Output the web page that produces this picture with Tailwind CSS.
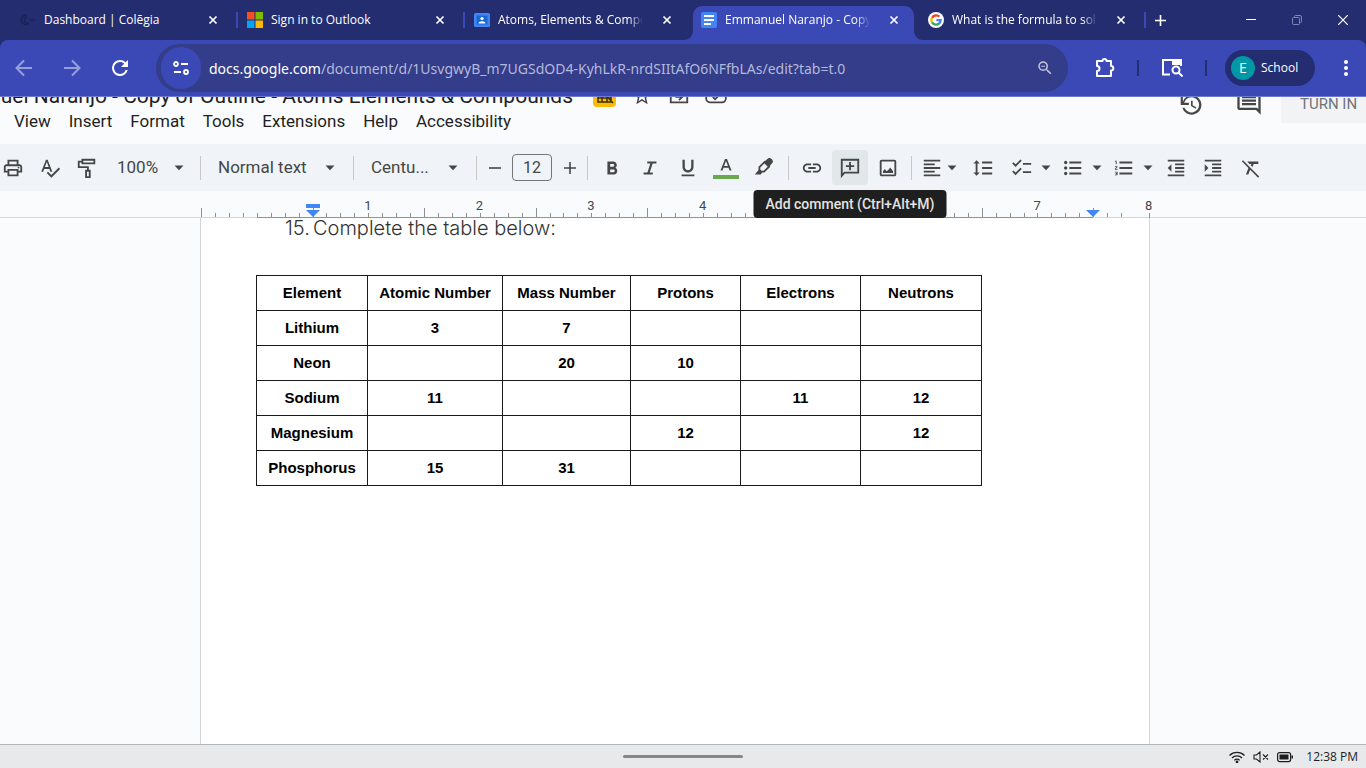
<!DOCTYPE html>
<html lang="en">
  <head>
    <meta charset="utf-8" />
    <meta content="width=device-width, initial-scale=1.0" name="viewport" />
    <title>Emmanuel Naranjo - Copy of Outline - Atoms Elements & Compounds</title>
    <script src="https://cdn.jsdelivr.net/npm/@tailwindcss/browser@4"></script>
  </head>
  <body
    class="flex flex-col h-screen overflow-hidden bg-[#f9fbfd] text-[#444746] font-['Roboto',sans-serif]"
  >
    <svg class="hidden">
      <symbol id="close" viewBox="0 0 16 16">
        <path d="M4.5 4.5l7 7M11.5 4.5l-7 7" stroke="currentColor" stroke-width="1.7" />
      </symbol>
      <symbol id="arrow" viewBox="0 0 10 6">
        <path d="M0.5 0.5h9L5 5.3z" fill="currentColor" />
      </symbol>
    </svg>

    <!-- Tab strip -->
    <header
      class="flex items-stretch h-10 shrink-0 pl-[9px] bg-[#252d71] text-white text-[12px] font-['Open_Sans',sans-serif]"
    >
      <div class="flex items-center w-[227px] pl-[11px] pr-[15px]">
        <svg class="w-4 h-4 shrink-0" viewBox="0 0 16 16">
          <path d="M7 3.500a4.500 4.500 0 1 0 2 7.500M7 5a3 3 0 0 0 1 6" fill="none" stroke="#1a2158" stroke-width="1.500" />
          <path d="M8 7.500h8M9 9h5" stroke="#1e2560" />
        </svg>
        <span class="flex-1 ml-2 mr-4 overflow-hidden whitespace-nowrap">Dashboard | Colēgia</span>
        <button aria-label="Close tab"><svg class="w-4 h-4"><use href="#close" /></svg></button>
      </div>
      <div class="self-center w-[2px] h-4 -mr-[2px] bg-[#3b49b6]"></div>
      <div class="flex items-center w-[227px] pl-[11px] pr-[15px]">
        <svg class="w-4 h-4 shrink-0" viewBox="0 0 16 16">
          <path d="M0 0h7.500v7.500H0z" fill="#f25022" />
          <path d="M8.500 0H16v7.500H8.500z" fill="#7fba00" />
          <path d="M0 8.500h7.500V16H0z" fill="#00a4ef" />
          <path d="M8.500 8.500H16V16H8.500z" fill="#ffb900" />
        </svg>
        <span class="flex-1 ml-2 mr-4 overflow-hidden whitespace-nowrap">Sign in to Outlook</span>
        <button aria-label="Close tab"><svg class="w-4 h-4"><use href="#close" /></svg></button>
      </div>
      <div class="self-center w-[2px] h-4 -mr-[2px] bg-[#3b49b6]"></div>
      <div class="flex items-center w-[227px] pl-[11px] pr-[15px]">
        <svg class="w-4 h-4 shrink-0" viewBox="0 0 16 16">
          <rect y="1" width="16" height="14" rx="1.500" fill="#4285f4" />
          <rect x="2.500" y="3.500" width="11" height="9" fill="#1967d2" />
          <circle cx="8" cy="6.500" r="1.600" fill="#fff" />
          <path d="M4.500 11.500c0-3 7-3 7 0z" fill="#fff" />
        </svg>
        <span
          class="flex-1 ml-2 mr-4 overflow-hidden whitespace-nowrap mask-r-from-90%"
          >Atoms, Elements &amp; Compounds</span
        >
        <button aria-label="Close tab"><svg class="w-4 h-4"><use href="#close" /></svg></button>
      </div>
      <div class="relative flex items-center w-[227px] pl-[11px] pr-[15px]">
        <!-- active tab shape with flared feet -->
        <svg class="absolute bottom-0 left-[-6px] w-[239px] h-[34px]" viewBox="0 0 239 34">
          <path
            d="M0 34C5 34 9 30 9 25V10C9 4 13 0 19 0H220C226 0 230 4 230 10V25C230 30 234 34 239 34z"
            fill="#3b49b6"
          />
        </svg>
        <svg class="relative w-4 h-4 shrink-0" viewBox="0 0 16 16">
          <rect width="16" height="16" rx="2" fill="#4285f4" />
          <path d="M3 4h10M3 8h10M3 12h7" stroke="#fff" stroke-width="1.800" />
        </svg>
        <span
          class="relative flex-1 ml-2 mr-4 overflow-hidden whitespace-nowrap mask-r-from-90%"
          >Emmanuel Naranjo - Copy of Outline</span
        >
        <button class="relative" aria-label="Close tab"><svg class="w-4 h-4"><use href="#close" /></svg></button>
      </div>
      <div class="flex items-center w-[227px] pl-[11px] pr-[15px]">
        <svg class="w-4 h-4 shrink-0" viewBox="0 0 48 48">
          <circle cx="24" cy="24" r="24" fill="#fff" />
          <g fill="none" stroke-width="7">
            <path d="M12 18A14 14 0 0 1 34 14" stroke="#ea4335" />
            <path d="M12 31A14 14 0 0 1 12 17" stroke="#fbbc04" />
            <path d="M33.500 34A14 14 0 0 1 12 31" stroke="#34a853" />
            <path d="M25 24.500H38A14 14 0 0 1 33 34.500" stroke="#4285f4" />
          </g>
        </svg>
        <span
          class="flex-1 ml-2 mr-4 overflow-hidden whitespace-nowrap mask-r-from-90%"
          >What is the formula to solve</span
        >
        <button aria-label="Close tab"><svg class="w-4 h-4"><use href="#close" /></svg></button>
      </div>
      <div class="self-center w-[2px] h-4 -mr-[2px] bg-[#3b49b6]"></div>
      <button class="ml-2 px-[3px]" aria-label="New tab">
        <svg class="w-[11px] h-[11px]" viewBox="0 0 11 11">
          <path d="M5.500 0v11M0 5.500h11" stroke="#fff" stroke-width="1.600" />
        </svg>
      </button>
      <div class="flex ml-auto">
        <button class="flex items-center justify-center w-[46px]" aria-label="Minimize">
          <svg class="w-[10px] h-[10px]" viewBox="0 0 10 10"><path d="M0 4.500h10" stroke="#fff" /></svg>
        </button>
        <button class="flex items-center justify-center w-[46px]" aria-label="Restore">
          <svg class="w-[10px] h-[10px]" viewBox="0 0 10 10">
            <g fill="none" stroke="#7f85b5">
              <rect x="0.500" y="2.500" width="7" height="7" rx="1" />
              <path d="M2.500 2V1.500q0-1 1-1H8q1.500 0 1.500 1.500v4.500q0 1-1 1H8" />
            </g>
          </svg>
        </button>
        <button class="flex items-center justify-center w-[46px]" aria-label="Close">
          <svg class="w-[10px] h-[10px]" viewBox="0 0 10 10">
            <path d="M0 0l10 10M10 0L0 10" stroke="#fff" stroke-width="1.200" />
          </svg>
        </button>
      </div>
    </header>

    <!-- Browser toolbar -->
    <div class="bg-[#252d71] shrink-0">
      <div
        class="flex items-center h-[57px] bg-[#3b49b6] border-b border-[#6f79cf] rounded-t-lg text-white font-['Open_Sans',sans-serif]"
      >
        <button class="flex justify-center w-12" aria-label="Back">
          <svg class="w-[18px] h-[18px]" viewBox="0 0 18 18" fill="none" stroke="#979edb" stroke-width="2">
            <path d="M17 9H2M9 1.500L1.500 9 9 16.500" />
          </svg>
        </button>
        <button class="flex justify-center w-12" aria-label="Forward">
          <svg class="w-[18px] h-[18px]" viewBox="0 0 18 18" fill="none" stroke="#979edb" stroke-width="2">
            <path d="M1 9h15M9 1.500L16.500 9 9 16.500" />
          </svg>
        </button>
        <button class="flex justify-center w-12" aria-label="Reload">
          <svg class="w-6 h-6" viewBox="0 0 24 24" fill="#fff">
            <path
              d="M17.650 6.350A7.960 7.960 0 0 0 12 4a8 8 0 1 0 7.730 10h-2.080A6 6 0 1 1 12 6c1.660 0 3.140.690 4.220 1.780L13 11h7V4z"
            />
          </svg>
        </button>
        <div class="flex items-center flex-1 h-12 ml-3 pl-[5px] pr-[14px] rounded-full bg-[#333d89]">
          <button
            class="flex items-center justify-center w-10 h-[42px] rounded-full bg-[#3b49b6]"
            aria-label="View site information"
          >
            <svg class="w-4 h-[14px]" viewBox="0 0 16 14" fill="none" stroke="#fff" stroke-width="1.800">
              <circle cx="3" cy="3" r="2" />
              <circle cx="13" cy="11" r="2" />
              <path d="M8 3h7M1 11h7" />
            </svg>
          </button>
          <span class="flex-1 ml-2 text-[14px] whitespace-nowrap text-[#b3b8dc] font-['Noto_Sans',sans-serif]"
            ><span class="text-white">docs.google.com</span>/document/d/1UsvgwyB_m7UGSdOD4-KyhLkR-nrdSIItAfO6NFfbLAs/edit?tab=t.0</span
          >
          <button aria-label="Zoom">
            <svg class="w-[18px] h-[18px]" viewBox="0 0 24 24" fill="#c4c6da">
              <path
                d="M15.500 14h-.790l-.280-.270A6.470 6.470 0 0 0 16 9.500 6.500 6.500 0 1 0 9.500 16c1.610 0 3.090-.590 4.230-1.570l.270.280v.790l5 4.990L20.490 19zm-6 0C7.010 14 5 11.990 5 9.500S7.010 5 9.500 5 14 7.010 14 9.500 11.990 14 9.500 14zM7 9h5v1.300H7z"
              />
            </svg>
          </button>
        </div>
        <button class="flex justify-center w-12 ml-[13px]" aria-label="Extensions">
          <svg class="w-6 h-6" viewBox="0 0 24 24" fill="none" stroke="#fff" stroke-width="2" stroke-linejoin="round">
            <path d="M4 5h5.500a2 2 0 0 1 4 0H18v5a2.300 2.300 0 0 1 0 4.600V20H4v-5a2.500 2.500 0 0 0 0-5z" />
          </svg>
        </button>
        <div class="w-[2px] h-4 ml-2 bg-[#252d71]"></div>
        <button class="flex justify-center w-12 ml-[9px]" aria-label="Side panel search">
          <svg class="w-[22px] h-[18px]" viewBox="0 0 22 18" fill="none" stroke="#fff" stroke-width="2">
            <path d="M9 15.500H2V1h18v6" />
            <path d="M11 0h10v6H11z" fill="#fff" stroke="none" />
            <circle cx="15" cy="11" r="3.500" />
            <path d="M17.500 13.500l4 4" />
          </svg>
        </button>
        <div class="w-[2px] h-4 ml-[9px] bg-[#252d71]"></div>
        <button class="flex items-center w-[90px] h-9 ml-[18px] pl-[6px] rounded-full bg-[#252d71] text-[12px]">
          <span class="w-6 h-6 rounded-full bg-[#0097a7] text-[14px] leading-6">E</span>
          <span class="ml-[6px]">School</span>
        </button>
        <button class="flex justify-center w-[51px] pl-[10px]" aria-label="Chrome menu">
          <svg class="w-1 h-4" viewBox="0 0 4 16" fill="#fff">
            <circle cx="2" cy="2" r="2" />
            <circle cx="2" cy="8" r="2" />
            <circle cx="2" cy="14" r="2" />
          </svg>
        </button>
      </div>
    </div>

    <!-- Document header, scrolled under the browser bar -->
    <div class="flex shrink-0 h-[47px] overflow-hidden">
      <div class="flex-1">
        <div class="flex items-center h-6 -mt-[13px] mb-px">
          <h1 class="flex justify-end w-[573px] text-[21px] leading-6 whitespace-nowrap text-[#1f1f1f]">
            Emmanuel Naranjo - Copy of Outline - Atoms Elements &amp; Compounds
          </h1>
          <div class="ml-5 w-[23px] h-[22px] rounded bg-[#fbbc04]">
            <svg class="w-[23px] h-[22px]" viewBox="0 0 23 22" fill="none" stroke="#3c3000" stroke-width="1.500">
              <path d="M5 4v13h13V4M5 13h13M9 4v13M14 4v13M5 9h13M8 5l12 13" />
            </svg>
          </div>
          <button class="ml-[15px]" aria-label="Star">
            <svg class="w-[22px] h-[22px]" viewBox="0 0 24 24" fill="currentColor">
              <path
                d="M22 9.240l-7.190-.620L12 2 9.190 8.630 2 9.240l5.460 4.730L5.820 21 12 17.270 18.180 21l-1.630-7.030zM12 15.400l-3.760 2.270 1-4.280-3.320-2.880 4.380-.380L12 6.100l1.710 4.040 4.380.380-3.320 2.880 1 4.280z"
              />
            </svg>
          </button>
          <button class="ml-[15px]" aria-label="Move">
            <svg class="w-[22px] h-[22px]" viewBox="0 0 24 24" fill="none" stroke="currentColor" stroke-width="2">
              <path d="M3 5h6l2 2h10v12H3zM8 13h7M12 9.500l3.500 3.500L12 16.500" />
            </svg>
          </button>
          <button class="ml-[15px]" aria-label="Document status">
            <svg class="w-[22px] h-[22px]" viewBox="0 0 24 24" fill="none" stroke="currentColor" stroke-width="2">
              <path d="M18.500 19H6a4.500 4.500 0 0 1-.500-9 6.500 6.500 0 0 1 12.500 0 4.500 4.500 0 0 1 .500 9zM8.500 13l2.500 2.500 4.500-4.500" />
            </svg>
          </button>
        </div>
        <nav class="flex gap-[18px] pl-[14px] text-[17px] leading-6 text-[#1f1f1f]">
          <button>View</button>
          <button>Insert</button>
          <button>Format</button>
          <button>Tools</button>
          <button>Extensions</button>
          <button>Help</button>
          <button>Accessibility</button>
        </nav>
      </div>
      <div class="flex items-start">
        <button class="-mt-[5px]" aria-label="Version history">
          <svg class="w-[26px] h-[26px]" viewBox="0 0 24 24" fill="currentColor">
            <path
              d="M13 3a9 9 0 0 0-8.500 6V4.500h-2V12H10v-2H5.700A7 7 0 1 1 6 14.500H4A9 9 0 1 0 13 3zm-1 5v5l4.280 2.540.720-1.210-3.500-2.080V8z"
            />
          </svg>
        </button>
        <button class="ml-[31px] -mt-2" aria-label="Comments">
          <svg class="w-7 h-7" viewBox="0 0 24 24" fill="currentColor">
            <path
              d="M21.990 4c0-1.100-.890-2-1.990-2H4c-1.100 0-2 .900-2 2v12c0 1.100.900 2 2 2h14l4 4zM20 4v13.170L18.830 16H4V4zM6 12h12v2H6zm0-3h12v2H6zm0-3h12v2H6z"
            />
          </svg>
        </button>
        <button
          class="w-[103px] h-[45px] ml-[18px] -mt-[19px] pl-[19px] -mr-[18px] pt-2 bg-[#f1f3f4] text-[15px] text-left text-[#6f7377]"
        >
          TURN IN
        </button>
      </div>
    </div>

    <!-- Formatting toolbar -->
    <div class="flex items-center shrink-0 h-[47px] -ml-[6px] bg-[#f0f4f9] text-[17px]">
      <button class="flex justify-center w-[37px]" aria-label="Print">
        <svg class="w-[22px] h-[22px]" viewBox="0 0 24 24" fill="currentColor">
          <path
            d="M19 8h-1V3H6v5H5c-1.660 0-3 1.340-3 3v6h4v4h12v-4h4v-6c0-1.660-1.340-3-3-3zM8 5h8v3H8zm8 12v2H8v-4h8zm2-2v-2H6v2H4v-4c0-.550.450-1 1-1h14c.550 0 1 .450 1 1v4z"
          />
          <circle cx="18" cy="11.500" r="1" />
        </svg>
      </button>
      <button class="flex justify-center w-[37px]" aria-label="Spelling and grammar check">
        <svg class="w-[22px] h-[22px]" viewBox="0 0 24 24" fill="currentColor">
          <path
            d="M12.450 16h2.090L9.430 3H7.570L2.460 16h2.090l1.120-3h5.640zm-6.020-5L8.500 5.480 10.570 11zm15.160.590l-8.090 8.090L9.830 16l-1.410 1.410 5.090 5.090L23 13z"
          />
        </svg>
      </button>
      <button class="flex justify-center w-[37px]" aria-label="Paint format">
        <svg class="w-[22px] h-[22px]" viewBox="0 0 24 24" fill="none" stroke="currentColor" stroke-width="2">
          <path d="M7 3h13v4H7zM7 5H3v6h10v4M11 15h4v7h-4z" />
        </svg>
      </button>
      <button class="flex items-center justify-between w-[95px] pl-3 pr-4" aria-label="Zoom level">
        100%<svg class="w-[10px] h-[6px]"><use href="#arrow" /></svg>
      </button>
      <div class="w-px h-6 bg-[#c7c7c7]"></div>
      <button class="flex items-center justify-between w-[152px] pl-[17px] pr-[18px]" aria-label="Styles">
        Normal text<svg class="w-[10px] h-[6px]"><use href="#arrow" /></svg>
      </button>
      <div class="w-px h-6 bg-[#c7c7c7]"></div>
      <button class="flex items-center justify-between w-[122px] pl-[17px] pr-[18px]" aria-label="Font">
        Centu...<svg class="w-[10px] h-[6px]"><use href="#arrow" /></svg>
      </button>
      <div class="w-px h-6 bg-[#c7c7c7]"></div>
      <button class="flex justify-center w-[35px]" aria-label="Decrease font size">
        <svg class="w-3 h-3" viewBox="0 0 12 12"><path d="M0 6h12" stroke="currentColor" stroke-width="1.600" /></svg>
      </button>
      <input
        class="w-10 h-[27px] border border-[#747775] rounded text-center text-[16px]"
        type="text"
        value="12"
        aria-label="Font size"
      />
      <button class="flex justify-center w-[35px]" aria-label="Increase font size">
        <svg class="w-3 h-3" viewBox="0 0 12 12">
          <path d="M0 6h12M6 0v12" stroke="currentColor" stroke-width="1.600" />
        </svg>
      </button>
      <div class="w-px h-6 bg-[#c7c7c7]"></div>
      <div class="flex justify-center w-[200px]">
        <button class="flex justify-center w-[38px]" aria-label="Bold">
          <svg class="w-[22px] h-[22px]" viewBox="0 0 24 24" fill="currentColor">
            <path
              d="M15.600 11.790c.970-.670 1.650-1.770 1.650-2.790 0-2.260-1.750-4-4-4H7v14h7.040c2.090 0 3.710-1.700 3.710-3.790 0-1.520-.860-2.820-2.150-3.420zM10 7.500h3c.830 0 1.500.670 1.500 1.500s-.670 1.500-1.500 1.500h-3zm3.500 9H10v-3h3.500c.830 0 1.500.670 1.500 1.500s-.670 1.500-1.500 1.500z"
            />
          </svg>
        </button>
        <button class="flex justify-center w-[38px]" aria-label="Italic">
          <svg class="w-[22px] h-[22px]" viewBox="0 0 24 24" fill="currentColor">
            <path d="M9 5v2.200h3.400l-3.200 9.600H5V19h10v-2.200h-3.300l3.200-9.600H19V5z" />
          </svg>
        </button>
        <button class="flex justify-center w-[38px]" aria-label="Underline">
          <svg class="w-[22px] h-[22px]" viewBox="0 0 24 24" fill="currentColor">
            <path
              d="M12 17c3.310 0 6-2.690 6-6V3h-2.500v8c0 1.930-1.570 3.500-3.500 3.500S8.500 12.930 8.500 11V3H6v8c0 3.310 2.690 6 6 6zm-7 2v2h14v-2z"
            />
          </svg>
        </button>
        <button class="flex justify-center w-[38px]" aria-label="Text color">
          <svg class="w-[26px] h-[22px]" viewBox="0 0 26 22">
            <path
              d="M12 2L7.500 13.500h2l1-2.800h5l1 2.800h2L14 2zm-.900 7L13 4l1.900 5z"
              fill="currentColor"
            />
            <path d="M0 18h26v4H0z" fill="#6aa84f" />
          </svg>
        </button>
        <button class="flex justify-center w-[38px]" aria-label="Highlight color">
          <svg class="w-[22px] h-[22px]" viewBox="0 0 24 24" fill="none" stroke="currentColor">
            <path d="M13 5.500l4-3.500q1.500-.500 2.500.500l1 1q1 1 0 2.500L17 10z" fill="currentColor" stroke-width="1.500" />
            <path d="M12.500 5.500L7 11v3.500L8.500 16H12l5.500-5.500z" stroke-width="2" />
            <path d="M2 19h6.500l2-3L7 13z" fill="currentColor" stroke="none" />
          </svg>
        </button>
      </div>
      <div class="w-px h-6 bg-[#c7c7c7]"></div>
      <div class="flex items-center justify-center w-[122px]">
        <button class="flex justify-center w-[38px]" aria-label="Insert link">
          <svg class="w-[22px] h-[22px]" viewBox="0 0 24 24" fill="currentColor">
            <path
              d="M3.900 12c0-1.710 1.390-3.100 3.100-3.100h4V7H7c-2.760 0-5 2.240-5 5s2.240 5 5 5h4v-1.900H7c-1.710 0-3.100-1.390-3.100-3.100zM8 13h8v-2H8zm9-6h-4v1.900h4c1.710 0 3.100 1.390 3.100 3.100s-1.390 3.100-3.100 3.100h-4V17h4c2.760 0 5-2.240 5-5s-2.240-5-5-5z"
            />
          </svg>
        </button>
        <div class="relative">
          <button
            class="flex items-center justify-center w-9 h-[35px] mx-px rounded bg-[#e2e7ea]"
            aria-label="Add comment"
          >
            <svg class="w-[22px] h-[22px]" viewBox="0 0 24 24" fill="none" stroke="currentColor" stroke-width="2">
              <path d="M3 20.500V3h18v14H6z" />
              <path d="M12 5.500v9M7.500 10h9" />
            </svg>
          </button>
          <div
            class="absolute z-10 top-10 left-1/2 -translate-x-1/2 px-3 leading-7 rounded bg-[#1f1f1f] text-[14px] font-medium whitespace-nowrap text-[#e3e3e3]"
            role="tooltip"
          >
            Add comment (Ctrl+Alt+M)
          </div>
        </div>
        <button class="flex justify-center w-[38px]" aria-label="Insert image">
          <svg class="w-[22px] h-[22px]" viewBox="0 0 24 24" fill="currentColor">
            <path
              d="M19 5v14H5V5zm0-2H5c-1.100 0-2 .900-2 2v14c0 1.100.900 2 2 2h14c1.100 0 2-.900 2-2V5c0-1.100-.900-2-2-2zM6.500 17.500v-2l2-2.500 2 2.500 2-1.500 2-2.500 3 4v2z"
            />
          </svg>
        </button>
      </div>
      <div class="w-px h-6 bg-[#c7c7c7]"></div>
      <button class="flex items-center w-[52px] pl-[9px] gap-1" aria-label="Align">
        <svg class="w-[22px] h-[22px]" viewBox="0 0 24 24" fill="currentColor">
          <path d="M3 3h18v2H3zM3 7h12v2H3zM3 11h18v2H3zM3 15h12v2H3zM3 19h18v2H3z" />
        </svg>
        <svg class="w-[10px] h-[6px]"><use href="#arrow" /></svg>
      </button>
      <button class="flex justify-center w-[38px]" aria-label="Line spacing">
        <svg class="w-[22px] h-[22px]" viewBox="0 0 24 24" fill="currentColor">
          <path
            d="M6 7h2.500L5 3.500 1.500 7H4v10H1.500L5 20.500 8.500 17H6zm5-2v2h11V5zm0 14h11v-2H11zm0-6h11v-2H11z"
          />
        </svg>
      </button>
      <button class="flex items-center w-[51px] pl-[9px] gap-2" aria-label="Checklist">
        <svg class="w-[22px] h-[22px]" viewBox="0 0 24 24" fill="none" stroke="currentColor" stroke-width="2">
          <path d="M13 7.500h9M13 16.500h9M2 6.500l3 3 6-6M2 15.500l3 3 6-6" />
        </svg>
        <svg class="w-[10px] h-[6px]"><use href="#arrow" /></svg>
      </button>
      <button class="flex items-center w-[51px] pl-[9px] gap-2" aria-label="Bulleted list">
        <svg class="w-[22px] h-[22px]" viewBox="0 0 24 24" fill="currentColor">
          <path d="M8 5h13v2H8zM8 11h13v2H8zM8 17h13v2H8z" />
          <circle cx="4" cy="6" r="1.800" />
          <circle cx="4" cy="12" r="1.800" />
          <circle cx="4" cy="18" r="1.800" />
        </svg>
        <svg class="w-[10px] h-[6px]"><use href="#arrow" /></svg>
      </button>
      <button class="flex items-center w-[51px] pl-[9px] gap-2" aria-label="Numbered list">
        <svg class="w-[22px] h-[22px]" viewBox="0 0 24 24" fill="currentColor">
          <path
            d="M2 17h2v.500H3v1h1v.500H2v1h3v-4H2zm1-9h1V4H2v1h1zm-1 3h1.800L2 13.100v.900h3v-1H3.200L5 10.900V10H2zm5-6v2h14V5zm0 14h14v-2H7zm0-6h14v-2H7z"
          />
        </svg>
        <svg class="w-[10px] h-[6px]"><use href="#arrow" /></svg>
      </button>
      <div class="flex ml-[2px]">
        <button class="flex justify-center w-[37px]" aria-label="Decrease indent">
          <svg class="w-[22px] h-[22px]" viewBox="0 0 24 24" fill="currentColor">
            <path d="M11 17h10v-2H11zm-8-5l4 4V8zm0 9h18v-2H3zM3 3v2h18V3zm8 6h10V7H11zm0 4h10v-2H11z" />
          </svg>
        </button>
        <button class="flex justify-center w-[38px]" aria-label="Increase indent">
          <svg class="w-[22px] h-[22px]" viewBox="0 0 24 24" fill="currentColor">
            <path d="M3 21h18v-2H3zM3 8v8l4-4zm8 9h10v-2H11zM3 3v2h18V3zm8 6h10V7H11zm0 4h10v-2H11z" />
          </svg>
        </button>
        <button class="flex justify-center w-[38px]" aria-label="Clear formatting">
          <svg class="w-[22px] h-[22px]" viewBox="0 0 24 24" fill="currentColor">
            <path
              d="M3.270 3.500L2 4.770l7.200 7.200L6.500 19h2.600l2-5.130L19.730 22.500 21 21.230zM8 5v.180L10.320 7.500h2.200l-.700 1.640 1.700 1.700 1.400-3.340H20V5z"
            />
          </svg>
        </button>
      </div>
    </div>

    <!-- Ruler: page is 8.5in wide, one tick per eighth of an inch -->
    <div class="shrink-0 h-[27px] pr-4 border-b border-[#d3d5d8]">
      <div id="ruler" class="grid grid-cols-[repeat(68,1fr)] w-[948px] h-[27px] mx-auto"></div>
    </div>

    <!-- Page -->
    <main class="flex-1 pr-4">
      <div class="w-[950px] h-full mx-auto pl-[55px] bg-white border-x border-[#d3d5d8]">
        <p class="flex h-[57px] pl-[29px] text-[20px] leading-5 font-light text-[#333333] font-['Inter',sans-serif]">
          <span class="w-[28px]">15.</span><span>Complete the table below:</span>
        </p>
        <table
          class="table-fixed w-[726px] border-collapse text-[15px] font-bold text-center text-black font-['Liberation_Sans',sans-serif] [&_tr]:h-[35px] [&_td]:border [&_td]:border-[#1a1a1a] [&_th]:border [&_th]:border-[#1a1a1a]"
        >
          <colgroup>
            <col class="w-[111px]" />
            <col class="w-[135px]" />
            <col class="w-[128px]" />
            <col class="w-[110px]" />
            <col class="w-[120px]" />
            <col class="w-[121px]" />
          </colgroup>
          <thead>
            <tr>
              <th>Element</th>
              <th>Atomic Number</th>
              <th>Mass Number</th>
              <th>Protons</th>
              <th>Electrons</th>
              <th>Neutrons</th>
            </tr>
          </thead>
          <tbody>
            <tr>
              <th>Lithium</th>
              <td>3</td>
              <td>7</td>
              <td></td>
              <td></td>
              <td></td>
            </tr>
            <tr>
              <th>Neon</th>
              <td></td>
              <td>20</td>
              <td>10</td>
              <td></td>
              <td></td>
            </tr>
            <tr>
              <th>Sodium</th>
              <td>11</td>
              <td></td>
              <td></td>
              <td>11</td>
              <td>12</td>
            </tr>
            <tr>
              <th>Magnesium</th>
              <td></td>
              <td></td>
              <td>12</td>
              <td></td>
              <td>12</td>
            </tr>
            <tr>
              <th>Phosphorus</th>
              <td>15</td>
              <td>31</td>
              <td></td>
              <td></td>
              <td></td>
            </tr>
          </tbody>
        </table>
      </div>
    </main>

    <!-- Taskbar -->
    <footer
      class="grid grid-cols-[1fr_auto_1fr] items-center shrink-0 h-6 pr-2 border-t border-[#b5b6b8] bg-[#e8e9ea] text-[#1f1f1f]"
    >
      <div></div>
      <div class="w-[120px] h-[3px] ml-2 rounded-full bg-[#858688]"></div>
      <div class="flex items-center justify-end">
        <svg class="w-4 h-3" viewBox="0 0 16 12" fill="none" stroke="currentColor" stroke-width="1.200">
          <path d="M0.500 4.500a10.500 10.500 0 0 1 15 0M3 7a7 7 0 0 1 10 0M5.300 9.300a3.800 3.800 0 0 1 5.400 0" />
          <circle cx="8" cy="10.800" r="0.800" fill="currentColor" />
        </svg>
        <svg class="w-4 h-3 ml-2" viewBox="0 0 16 12" fill="none" stroke="currentColor" stroke-width="1.100">
          <path d="M1 4h2.500L7 1v10L3.500 8H1zM10 3.500l5 5M15 3.500l-5 5" />
        </svg>
        <svg class="w-4 h-3 ml-2" viewBox="0 0 16 12">
          <rect x="0.600" y="1.600" width="13" height="9" rx="2" fill="none" stroke="currentColor" stroke-width="1.200" />
          <rect x="2.500" y="3.500" width="9" height="5" fill="currentColor" />
          <path d="M14.500 4.500h1.500v3h-1.500z" fill="currentColor" />
        </svg>
        <span class="ml-[13px] text-[12px] font-['Open_Sans',sans-serif]">12:38 PM</span>
      </div>
    </footer>

    <script>
      const ruler = document.getElementById("ruler");

      for (let i = 0; i <= 68; i++) {
        const cell = document.createElement("div");
        // the last one only closes the row on the right edge
        cell.className =
          i === 68 ? "relative w-0 col-start-68 row-start-1 justify-self-end" : "relative row-start-1 border-b";
        if (i < 68) {
          cell.classList.add(i >= 4 && i < 64 ? "border-[#8f9193]" : "border-[#d3d5d8]");
        }

        const tick = document.createElement("div");
        tick.className = "absolute bottom-0 left-0 w-px bg-[#8f9193]";
        tick.classList.add(i % 8 === 0 ? "h-[9px]" : "h-1");
        cell.append(tick);

        if (i % 8 === 4 && i > 4) {
          const label = document.createElement("span");
          label.className = "absolute top-[7px] -ml-1 text-[13px] leading-4 text-[#444746]";
          label.textContent = (i - 4) / 8;
          cell.append(label);
        }

        // indent and margin markers
        if (i === 8 || i === 64) {
          const marker = document.createElement("div");
          marker.className = "absolute bottom-0 -left-[7px] w-[14px]";
          marker.innerHTML =
            (i === 8 ? '<div class="h-1 mb-[2px] bg-[#4285f4]"></div>' : "") +
            '<svg class="block w-[14px] h-[7px]" viewBox="0 0 14 7"><path d="M0 0h14L7 7z" fill="#4285f4"/></svg>';
          cell.append(marker);
        }
        ruler.append(cell);
      }
    </script>
  </body>
</html>
